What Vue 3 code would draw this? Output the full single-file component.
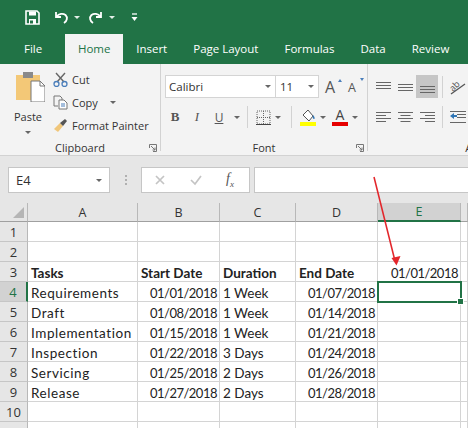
<script setup>
const columns = ['A', 'B', 'C', 'D', 'E', '']
const sheet = [
  [],
  [],
  ['Tasks', 'Start Date', 'Duration', 'End Date', '01/01/2018'],
  ['Requirements', '01/01/2018', '1 Week', '01/07/2018', ''],
  ['Draft', '01/08/2018', '1 Week', '01/14/2018', ''],
  ['Implementation', '01/15/2018', '1 Week', '01/21/2018', ''],
  ['Inspection', '01/22/2018', '3 Days', '01/24/2018', ''],
  ['Servicing', '01/25/2018', '2 Days', '01/26/2018', ''],
  ['Release', '01/27/2018', '2 Days', '01/28/2018', ''],
  [],
  [],
]
const rows = sheet.map((cells, r) =>
  Array.from({ length: 6 }, (_, c) => {
    const bold = r === 2 && c < 4
    const right = r !== 2 ? c === 1 || c === 3 : c === 4
    return {
      text: cells[c] || '',
      right,
      bold,
      task: c === 0 && !bold,
      date: right,
      selected: r === 3 && c === 4,
    }
  })
)
const tabs = ['File', 'Home', 'Insert', 'Page Layout', 'Formulas', 'Data', 'Review']
</script>

<template>
  <div class="app">
    <div class="qat">
      <svg class="i15" viewBox="0 0 15 15"><path d="M1 1h11l2 2v11H1z" fill="none" stroke="#fff" stroke-width="1.6"/><path d="M4 1.5h7v4H4zM4 9h7v5H4z" fill="#fff"/><path d="M5 10.5h3v3H5z" fill="#217346"/></svg>
      <svg class="undo" viewBox="0 0 15 15"><path d="M2 2v5h5M2.5 6.5C5 3.5 9 3 11.500 5c2.500 2.500 1.500 6-1.500 8" fill="none" stroke="#fff" stroke-width="1.800"/></svg>
      <i class="caret white c-a"></i>
      <svg class="redo" viewBox="0 0 15 15"><path d="M13 2v5H8M12.500 6.500C10 3.500 6 3 3.500 5 1 7.500 2 11 5 13" fill="none" stroke="#fff" stroke-width="1.800"/></svg>
      <i class="caret white c-b"></i>
      <svg class="custom" viewBox="0 0 7 9"><path d="M1 1h5" stroke="#fff" stroke-width="1.300"/><path d="M0.500 4h6L3.500 8z" fill="#fff"/></svg>
    </div>
    <nav class="tabs">
      <span v-for="t in tabs" :key="t" class="tab" :class="{ on: t === 'Home' }">{{ t }}</span>
    </nav>

    <section class="ribbon">
      <div class="group clip">
        <div class="group-body clip-body">
          <div class="paste">
            <svg class="paste-icon" viewBox="0 0 29 30">
              <rect x="0" y="3" width="24" height="25" fill="#f3c877"/>
              <rect x="7" y="0" width="10" height="6" fill="#8a8a8a"/>
              <path d="M15 9h9l5 5v16H15z" fill="#fff" stroke="#777"/>
              <path d="M24 9v5h5" fill="none" stroke="#777"/>
            </svg>
            <span>Paste</span>
            <i class="caret"></i>
          </div>
          <div class="clip-list">
            <div class="clip-item">
              <svg class="i15" viewBox="0 0 15 15"><path d="M3 1l8 9M12 1l-8 9" stroke="#666" stroke-width="1.400"/><circle cx="3.500" cy="12" r="2.500" fill="none" stroke="#4a7ebb" stroke-width="1.300"/><circle cx="11.500" cy="12" r="2.500" fill="none" stroke="#4a7ebb" stroke-width="1.300"/></svg>
              <span>Cut</span>
            </div>
            <div class="clip-item">
              <svg class="i15" viewBox="0 0 15 15"><path d="M1 1h6l2 2v2M1 1v10h4" fill="none" stroke="#777"/><path d="M6 5h5l3 3v6H6z" fill="#fff" stroke="#777"/><path d="M8 9h4M8 11h4" stroke="#4a7ebb"/></svg>
              <span>Copy</span>
              <i class="caret copy-caret"></i>
            </div>
            <div class="clip-item">
              <svg class="i15" viewBox="0 0 15 15"><path d="M1 11l6-6 3 3-5 6z" fill="#f0c67a"/><path d="M7 5l3 3 4-5-2-2z" fill="#555"/></svg>
              <span>Format Painter</span>
            </div>
          </div>
        </div>
        <div class="group-label">Clipboard<svg class="launch" viewBox="0 0 8 8"><path d="M.5 4V.5H7.500V7.500H4M2 2l4 4M3.500 6H6V3.500" fill="none" stroke="#777"/></svg></div>
      </div>

      <div class="group font">
        <div class="group-body font-body">
          <div class="font-row">
            <div class="select font-name"><span>Calibri</span><i class="caret"></i></div>
            <div class="select font-size"><span>11</span><i class="caret"></i></div>
            <div class="grow">A<i class="tip up"></i></div>
            <div class="shrink">A<i class="tip down"></i></div>
          </div>
          <div class="font-row second">
            <b class="style">B</b>
            <em class="style ital">I</em>
            <u class="style und">U</u>
            <i class="caret u-caret"></i>
            <i class="sep s1"></i>
            <svg class="i15" viewBox="0 0 15 15"><path d="M1 1h13v13H1zM7.500 1v13M1 7.500h13" fill="none" stroke="#666" stroke-dasharray="1 1"/><path d="M0 14.500h15" stroke="#444"/></svg>
            <i class="caret"></i>
            <i class="sep s2"></i>
            <div class="fill">
              <svg class="i15" viewBox="0 0 15 13"><path d="M2 6l5-5 5 6-4 5z" fill="#fff" stroke="#555"/><path d="M12 6c2 2 2 4 1 4s-2-2-1-4z" fill="#2f75b5"/></svg>
              <i class="swatch yellow"></i>
            </div>
            <i class="caret"></i>
            <div class="color">A<i class="swatch red"></i></div>
            <i class="caret"></i>
          </div>
        </div>
        <div class="group-label">Font<svg class="launch" viewBox="0 0 8 8"><path d="M.5 4V.5H7.500V7.500H4M2 2l4 4M3.500 6H6V3.500" fill="none" stroke="#777"/></svg></div>
      </div>

      <div class="group align">
        <div class="group-body align-body">
          <div class="align-row">
            <div class="al"><svg viewBox="0 0 15 12"><path d="M0 1.500h15M0 4.500h15M0 7.500h15" stroke="#666"/></svg></div>
            <div class="al"><svg viewBox="0 0 15 12"><path d="M0 3.500h15M0 6.500h15M0 9.500h15" stroke="#666"/></svg></div>
            <div class="al pressed"><svg viewBox="0 0 15 12"><path d="M0 5.500h15M0 8.500h15M0 11.500h15" stroke="#666"/></svg></div>
            <i class="sep"></i>
            <svg class="orient" viewBox="0 0 16 16"><path d="M1 15L15 5" stroke="#555" stroke-width="1.300"/><text x="0" y="10" transform="rotate(-45 5 8)" class="orient-text">ab</text></svg>
          </div>
          <div class="align-row">
            <div class="al"><svg viewBox="0 0 15 12"><path d="M0 1.500h15M0 4.500h10M0 7.500h15M0 10.500h10" stroke="#666"/></svg></div>
            <div class="al"><svg viewBox="0 0 15 12"><path d="M0 1.500h15M2.500 4.500h10M0 7.500h15M2.500 10.500h10" stroke="#666"/></svg></div>
            <div class="al"><svg viewBox="0 0 15 12"><path d="M0 1.500h15M5 4.500h10M0 7.500h15M5 10.500h10" stroke="#666"/></svg></div>
            <i class="sep"></i>
            <svg class="orient" viewBox="0 0 16 14"><path d="M0 1.500h16M7 4.500h9M7 7.500h9M0 12.500h16" stroke="#666"/><path d="M0 6l4-3v2h3v2H4v2z" fill="#2f75b5"/></svg>
          </div>
        </div>
        <div class="group-label">Alignment</div>
      </div>
    </section>

    <div class="formula">
      <div class="name-box"><span>E4</span><i class="caret"></i></div>
      <div class="dots"><i></i><i></i><i></i></div>
      <div class="fx-box">
        <svg class="fx-mark" viewBox="0 0 12 12"><path d="M2 2l8 8M10 2l-8 8" stroke="#c4c4c4" stroke-width="1.700"/></svg>
        <svg class="fx-mark" viewBox="0 0 12 12"><path d="M1 6l4 4 6-8" fill="none" stroke="#c4c4c4" stroke-width="1.700"/></svg>
        <span class="fx">f<sub>x</sub></span>
      </div>
      <div class="input"></div>
    </div>

    <div class="grid">
      <div class="corner"><i></i></div>
      <div v-for="(c, i) in columns" :key="i" class="col-head" :class="{ cur: c === 'E' }">{{ c }}</div>
      <template v-for="(row, r) in rows" :key="r">
        <div class="row-head" :class="{ cur: r === 3 }">{{ r < 10 ? r + 1 : '' }}</div>
        <div
          v-for="(cell, c) in row"
          :key="c"
          class="cell"
          :class="{ right: cell.right, bold: cell.bold, selected: cell.selected, task: cell.task, date: cell.date }"
        >{{ cell.text }}<i v-if="cell.selected" class="handle"></i></div>
      </template>
    </div>

    <svg class="arrow" viewBox="0 0 468 428">
      <path d="M374 177L394.500 259" stroke="#e3262b" stroke-width="1.600"/>
      <path d="M391.500 258L400.500 256L396.500 265.500z" fill="#e3262b"/>
    </svg>
  </div>
</template>

<style scoped>
.app {
  position: relative;
  width: 468px;
  height: 428px;
  overflow: hidden;
  background: #e6e6e6;
  font-family: "Open Sans", "Liberation Sans", sans-serif;
  font-size: 11px;
  color: #333;
}
.qat {
  height: 34px;
  background: #217346;
  display: flex;
  align-items: center;
  padding-left: 25px;
  box-sizing: border-box;
}
.i15 { width: 15px; height: 15px; flex: none; }
.undo { width: 15px; height: 15px; margin-left: 14px; }
.redo { width: 15px; height: 15px; margin-left: 8px; }
.c-a { margin-left: 5px; }
.c-b { margin-left: 6px; }
.custom { width: 7px; height: 9px; margin-left: 16px; }
.caret {
  display: inline-block;
  width: 0;
  height: 0;
  flex: none;
  border-left: 3px solid transparent;
  border-right: 3px solid transparent;
  border-top: 3px solid #666;
}
.caret.white { border-top-color: #e3efe8; }
.tabs {
  height: 30px;
  background: #217346;
  display: flex;
  padding-left: 11px;
  color: #fff;
  font-size: 11.500px;
  white-space: nowrap;
}
.tab {
  padding: 0 13px;
  line-height: 30px;
  height: 30px;
  box-sizing: border-box;
  flex: none;
}
.tab.on {
  background: #f3f3f3;
  color: #217346;
  padding: 0;
  margin-left: 10px;
  width: 58px;
  text-align: center;
}
.ribbon {
  height: 92px;
  background: #f3f3f3;
  display: flex;
  border-bottom: 1px solid #d2d2d2;
  box-sizing: border-box;
  padding-bottom: 4px;
}
.group {
  display: flex;
  flex-direction: column;
  flex: none;
  border-right: 1px solid #d2d2d2;
  box-sizing: border-box;
  position: relative;
}
.group-body { flex: none; height: 75px; box-sizing: border-box; }
.group-label {
  height: 19px;
  line-height: 18px;
  text-align: center;
  position: relative;
  flex: none;
}
.launch {
  position: absolute;
  right: 3px;
  top: 5px;
  width: 8px;
  height: 8px;
}
.clip { width: 161px; }
.clip-body { display: flex; padding: 4px 0 0 9px; }
.paste {
  width: 38px;
  display: flex;
  flex-direction: column;
  align-items: center;
}
.paste-icon { width: 29px; height: 30px; margin-left: 4px; margin-top: 4px; flex: none; }
.paste span { margin-top: 6px; line-height: 17px; }
.paste .caret { margin-top: 6px; }
.clip-list { margin-left: 6px; display: flex; flex-direction: column; }
.clip-item {
  display: flex;
  align-items: center;
  gap: 4px;
  height: 23px;
  flex: none;
  white-space: nowrap;
}
.copy-caret { margin-left: 8px; }
.font { width: 207px; }
.font-body { padding: 11px 0 0 4px; }
.font-row { display: flex; align-items: center; height: 23px; }
.font-row.second { margin-top: 8px; gap: 4px; padding-left: 1px; height: 22px; }
.select {
  height: 23px;
  background: #fff;
  border: 1px solid #d4d4d4;
  box-sizing: border-box;
  display: flex;
  align-items: center;
  justify-content: space-between;
  padding: 0 4px 0 3px;
  font-size: 11.500px;
  flex: none;
}
.font-name { width: 111px; }
.font-size { width: 43px; border-left: 0; padding-left: 4px; }
.grow, .shrink { position: relative; line-height: 20px; color: #555; flex: none; }
.grow { margin-left: 6px; width: 18px; font-size: 16px; }
.shrink { margin-left: 5px; width: 14px; font-size: 12.500px; padding-top: 2px; }
.tip { position: absolute; top: 2px; right: 0; width: 0; height: 0; border-left: 2.500px solid transparent; border-right: 2.500px solid transparent; }
.tip.up { border-bottom: 3px solid #4a7ebb; right: 1px; }
.tip.down { border-top: 3px solid #4a7ebb; right: -2px; }
.style { width: 18px; flex: none; text-align: center; font-family: "Liberation Serif", serif; font-size: 13px; color: #555; font-style: normal; }
.style.ital { font-style: italic; }
.style.und { font-family: "Open Sans", sans-serif; font-size: 12px; }
.u-caret { margin-left: 2px; }
.sep { width: 1px; height: 22px; background: #d2d2d2; margin: 0 4px; flex: none; }
.sep.s1 { margin: 0 4px 0 3px; }
.sep.s2 { margin: 0 4px 0 6px; }
.fill, .color { position: relative; display: flex; flex-direction: column; align-items: center; width: 16px; flex: none; }
.fill .i15 { height: 13px; }
.swatch { display: block; width: 16px; height: 4px; margin-top: 0; }
.yellow { background: #ffff00; }
.red { background: #e60000; }
.color { font-size: 14px; line-height: 14px; color: #444; margin-left: 2px; }
.align { width: 248px; }
.align-body { padding: 11px 0 0 8px; }
.align-row { display: flex; align-items: center; height: 23px; }
.align-row + .align-row { margin-top: 8px; height: 22px; }
.al { width: 22px; height: 23px; display: flex; align-items: center; justify-content: center; flex: none; }
.al svg { width: 15px; height: 12px; margin-right: 7px; }
.al.pressed { background: #c6c6c6; margin: 0 4px 0 -4px; }
.al.pressed svg { margin-right: 0; }
.align-row .sep { margin: 0 7px 0 0; }
.orient { width: 16px; height: 16px; flex: none; }
.orient-text { font-family: "Open Sans", sans-serif; font-size: 9px; fill: #555; }
.formula {
  height: 47px;
  box-sizing: border-box;
  display: flex;
  padding: 11px 0 10px 8px;
  background: #e6e6e6;
}
.name-box, .fx-box, .input {
  background: #fff;
  border: 1px solid #c6c6c6;
  box-sizing: border-box;
}
.name-box {
  width: 102px;
  display: flex;
  align-items: center;
  justify-content: space-between;
  padding: 0 7px;
  font-size: 13px;
}
.dots { width: 31px; display: flex; flex-direction: column; align-items: center; justify-content: center; gap: 2px; }
.dots i { width: 2px; height: 2px; background: #b0b0b0; }
.fx-box {
  width: 109px;
  display: flex;
  align-items: center;
  gap: 24px;
  padding-left: 12px;
}
.fx-mark { width: 12px; height: 12px; flex: none; }
.fx { font-family: "Liberation Serif", serif; font-style: italic; font-size: 14px; color: #555; }
.fx sub { font-size: 9px; }
.input { flex: 1; margin-left: 4px; border-right: 0; }
.grid {
  display: grid;
  grid-template-columns: 28px 110px 82px 76px 82px 83px 7px;
  grid-auto-rows: 20px;
  grid-template-rows: 19px;
  background: #fff;
  font-family: Lato, "Liberation Sans", sans-serif;
  font-size: 13.500px;
  color: #222;
}
.corner, .col-head, .row-head {
  background: #e6e6e6;
  font-family: "Open Sans", "Liberation Sans", sans-serif;
  color: #333;
  box-sizing: border-box;
  display: flex;
  align-items: center;
  justify-content: center;
}
.corner { border-right: 1px solid #b8b8b8; border-bottom: 1px solid #a0a0a0; position: relative; }
.corner i {
  position: absolute;
  right: 3px;
  bottom: 3px;
  width: 0;
  height: 0;
  border-left: 11px solid transparent;
  border-bottom: 11px solid #b5b5b5;
}
.col-head { border-right: 1px solid #b8b8b8; border-bottom: 1px solid #a0a0a0; font-size: 12.500px; }
.col-head.cur { background: #d2d2d2; color: #217346; border-bottom: 2px solid #217346; }
.row-head { border-right: 1px solid #b8b8b8; border-bottom: 1px solid #c6c6c6; font-size: 13px; }
.row-head.cur { background: #d2d2d2; color: #217346; border-right: 2px solid #217346; }
.cell {
  border-right: 1px solid #d4d4d4;
  border-bottom: 1px solid #d4d4d4;
  box-sizing: border-box;
  padding: 1px 3px 0;
  line-height: 20px;
  white-space: nowrap;
  position: relative;
}
.task { letter-spacing: 0.550px; }
.date { font-size: 13px; letter-spacing: -0.500px; padding-right: 2px; }
.right { text-align: right; }
.bold { font-weight: 700; }
.selected {
  border: 2px solid #217346;
  margin: -1px;
  z-index: 1;
}
.handle {
  position: absolute;
  right: -4px;
  bottom: -4px;
  width: 5px;
  height: 5px;
  background: #217346;
  border: 1px solid #fff;
}
.arrow {
  position: absolute;
  left: 0;
  top: 0;
  width: 468px;
  height: 428px;
  pointer-events: none;
  z-index: 2;
}
</style>
